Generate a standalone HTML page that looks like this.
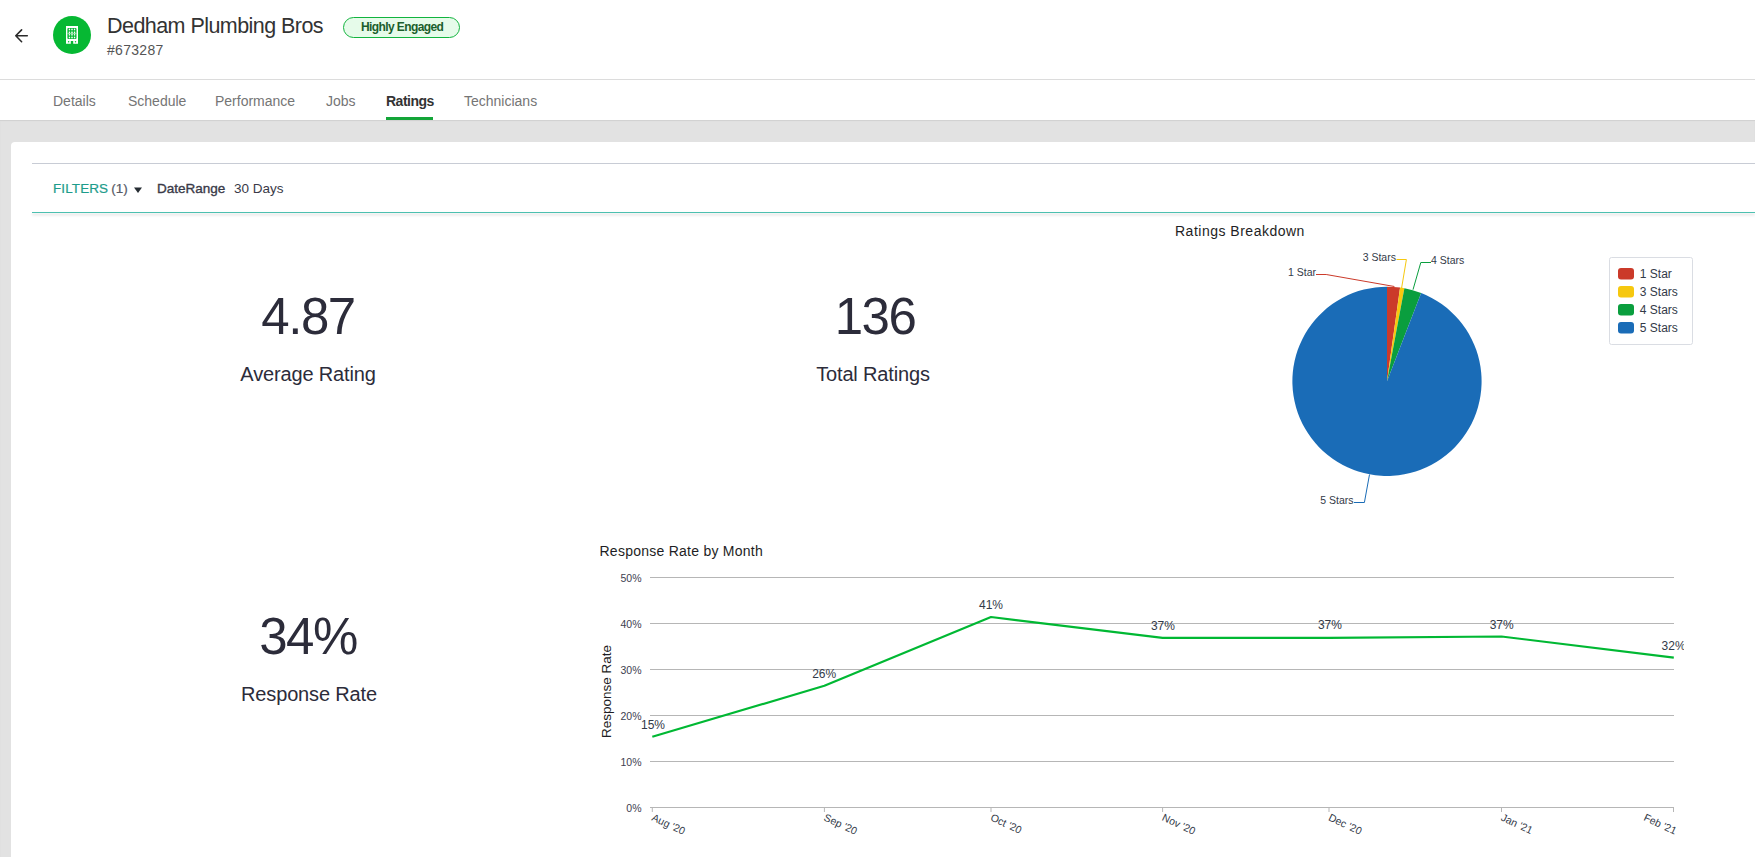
<!DOCTYPE html>
<html><head><meta charset="utf-8">
<style>
html,body{margin:0;padding:0;}
body{width:1755px;height:857px;overflow:hidden;position:relative;background:#fff;font-family:"Liberation Sans",sans-serif;}
.a{position:absolute;white-space:nowrap;line-height:1;}
#hdr-line{position:absolute;left:0;top:79px;width:1755px;height:1px;background:#dcdcdc;}
#gray{position:absolute;left:0;top:120px;width:1755px;height:737px;background:#e2e2e2;box-shadow:inset 0 1px 1px rgba(0,0,0,0.08);}
#card{position:absolute;left:11px;top:142px;width:1760px;height:730px;background:#fff;border-radius:4px;}
.tab{position:absolute;top:94px;font-size:14px;color:#757575;line-height:1;}
.kpi{font-size:51px;color:#2c2c3a;transform:translateX(-50%);letter-spacing:-1.5px;}
.kpil{font-size:20px;color:#2c2c3a;transform:translateX(-50%);letter-spacing:-0.15px;}
</style></head><body>
<!-- header -->
<svg class="a" style="left:13px;top:27px" width="18" height="18" viewBox="0 0 18 18">
  <path d="M14.3 8.8H3M8.6 2.9L2.8 8.8L8.6 14.7" fill="none" stroke="#2b2b2b" stroke-width="1.6" stroke-linecap="round" stroke-linejoin="round"/>
</svg>
<div class="a" style="left:53px;top:16px;width:38px;height:38px;border-radius:50%;background:#06b833;"></div>
<svg class="a" style="left:66px;top:26px" width="12" height="18" viewBox="0 0 12 18">
  <path d="M0 0h12v17.7h-4.8v-2.6h-2.4v2.6h-4.8z" fill="#fff"/>
  <rect x="1.4" y="1.9" width="9.1" height="11.1" rx="1" fill="#06b833"/>
  <path d="M1.6 7.4h8.8" stroke="#fff" stroke-width="0.7" opacity="0.8"/>
  <path d="M3.4 2.2v10.5M6 2.2v10.5M8.6 2.2v10.5" stroke="#fff" stroke-width="0.6" opacity="0.45"/>
  <g fill="#fff"><rect x="2.8" y="2.8" width="1.3" height="1.3"/><rect x="5.3" y="2.8" width="1.4" height="1.3"/><rect x="7.9" y="2.8" width="1.3" height="1.3"/>
  <rect x="2.8" y="5.7" width="1.3" height="1.3"/><rect x="5.3" y="5.7" width="1.4" height="1.3"/><rect x="7.9" y="5.7" width="1.3" height="1.3"/>
  <rect x="2.8" y="8.1" width="1.3" height="1.3"/><rect x="5.3" y="8.1" width="1.4" height="1.3"/><rect x="7.9" y="8.1" width="1.3" height="1.3"/>
  <rect x="2.8" y="10.9" width="1.3" height="1.3"/><rect x="5.3" y="10.9" width="1.4" height="1.3"/><rect x="7.9" y="10.9" width="1.3" height="1.3"/></g>
  <circle cx="2.6" cy="15.7" r="0.75" fill="#06b833"/><circle cx="9.5" cy="15.7" r="0.75" fill="#06b833"/>
</svg>
<div class="a" id="title" style="left:107px;top:16px;font-size:21.5px;letter-spacing:-0.55px;color:#333;">Dedham Plumbing Bros</div>
<div class="a" id="sub" style="left:107px;top:43px;font-size:14px;color:#555;letter-spacing:0.3px;">#673287</div>
<div class="a" style="left:343px;top:17px;width:115px;height:19px;border:1px solid #12b43e;border-radius:11px;background:#e6fbea;"></div>
<div class="a" id="badge" style="left:361px;top:21px;font-size:12px;font-weight:bold;letter-spacing:-0.6px;color:#1b5e2c;">Highly Engaged</div>
<div id="hdr-line"></div>
<!-- tabs -->
<div class="tab" style="left:53px">Details</div>
<div class="tab" style="left:128px">Schedule</div>
<div class="tab" style="left:215px">Performance</div>
<div class="tab" style="left:326px">Jobs</div>
<div class="tab" style="left:386px;color:#333;font-weight:bold;letter-spacing:-0.5px">Ratings</div>
<div class="tab" style="left:464px">Technicians</div>
<div class="a" style="left:386px;top:117px;width:47px;height:3px;background:#13a538;"></div>
<div id="gray"></div>
<div id="card"></div>
<!-- filter bar -->
<div class="a" style="left:32px;top:163px;width:1723px;height:1px;background:#c8ccd5;"></div>
<div class="a" style="left:32px;top:212px;width:1723px;height:1px;background:#4cc0b0;box-shadow:0 2px 3px rgba(0,0,0,0.2);"></div>
<div class="a" id="filters" style="left:53px;top:182px;font-size:13.5px;letter-spacing:0.1px;color:#1d9c8c;-webkit-text-stroke:0.2px #1d9c8c;">FILTERS<span style="color:#555a66;-webkit-text-stroke:0.2px #555a66;margin-left:3px;letter-spacing:0;font-size:13.5px">(1)</span></div>
<svg class="a" style="left:133px;top:187px" width="10" height="7" viewBox="0 0 10 7"><path d="M1 0.5h8L5 6z" fill="#262d33"/></svg>
<div class="a" id="dr" style="left:157px;top:182px;font-size:13.5px;color:#3a3a48;-webkit-text-stroke:0.35px #3a3a48;">DateRange</div>
<div class="a" id="days" style="left:234px;top:182px;font-size:13.5px;color:#3a3a48;">30 Days</div>
<!-- KPIs -->
<div class="a kpi" id="k1" style="left:308px;top:291px;">4.87</div>
<div class="a kpil" id="k1l" style="left:308px;top:364px;">Average Rating</div>
<div class="a kpi" id="k2" style="left:875px;top:291px;">136</div>
<div class="a kpil" id="k2l" style="left:873px;top:364px;">Total Ratings</div>
<div class="a kpi" id="k3" style="left:308px;top:611px;">34%</div>
<div class="a kpil" id="k3l" style="left:309px;top:684px;">Response Rate</div>
<!-- charts -->
<svg class="a" style="left:0;top:0" width="1755" height="857" viewBox="0 0 1755 857">
<style>
.t{font-family:"Liberation Sans",sans-serif;fill:#1e1e24;font-size:14px;}
.pl{font-family:"Liberation Sans",sans-serif;fill:#333a48;font-size:10.5px;}
.lg{font-family:"Liberation Sans",sans-serif;fill:#333a48;font-size:12px;}
.yl{font-family:"Liberation Sans",sans-serif;fill:#3d4150;font-size:10.5px;}
.xl{font-family:"Liberation Sans",sans-serif;fill:#333a48;font-size:10.5px;}
.dl{font-family:"Liberation Sans",sans-serif;fill:#333a48;font-size:12px;}
</style>
<!-- pie -->
<text x="1175" y="236" class="t" style="letter-spacing:0.5px">Ratings Breakdown</text>
<path d="M1387 381.3L1387.00 286.70A94.6 94.6 0 0 1 1400.07 287.61Z" fill="#cb3a2a"/>
<path d="M1387 381.3L1400.07 287.61A94.6 94.6 0 0 1 1404.38 288.31Z" fill="#f6c80f"/>
<path d="M1387 381.3L1404.38 288.31A94.6 94.6 0 0 1 1421.17 293.09Z" fill="#0a9e3e"/>
<path d="M1387 381.3L1421.17 293.09A94.6 94.6 0 1 1 1387.00 286.70Z" fill="#1a6cb7"/>
<path d="M1316 274.5H1326.2L1394.4 286.5" fill="none" stroke="#cb3a2a" stroke-width="1"/>
<path d="M1396.5 259.5H1406.4L1401.6 288" fill="none" stroke="#f6c80f" stroke-width="1"/>
<path d="M1431 262.5H1420.8L1413 289.7" fill="none" stroke="#0a9e3e" stroke-width="1"/>
<path d="M1354 502.5H1364.4L1369.5 474.5" fill="none" stroke="#1a6cb7" stroke-width="1"/>
<text x="1288" y="275.7" class="pl">1 Star</text>
<text x="1362.7" y="261" class="pl">3 Stars</text>
<text x="1431" y="264" class="pl">4 Stars</text>
<text x="1320.3" y="503.9" class="pl">5 Stars</text>
<rect x="1609.5" y="257.5" width="83" height="87" rx="2" fill="#fff" stroke="#dadde3" stroke-width="1"/>
<rect x="1618" y="268" width="16" height="11.5" rx="3" fill="#cb3a2a"/>
<rect x="1618" y="286" width="16" height="11.5" rx="3" fill="#f6c80f"/>
<rect x="1618" y="304" width="16" height="11.5" rx="3" fill="#0a9e3e"/>
<rect x="1618" y="322" width="16" height="11.5" rx="3" fill="#1a6cb7"/>
<text x="1639.8" y="278.1" class="lg">1 Star</text>
<text x="1639.8" y="296.1" class="lg">3 Stars</text>
<text x="1639.8" y="314.1" class="lg">4 Stars</text>
<text x="1639.8" y="332.1" class="lg">5 Stars</text>
<!-- line chart -->
<text x="599.5" y="555.8" class="t" style="letter-spacing:0.25px">Response Rate by Month</text>
<rect x="650" y="577" width="1024" height="1" fill="#b6b6b6"/>
<rect x="650" y="623" width="1024" height="1" fill="#b6b6b6"/>
<rect x="650" y="669" width="1024" height="1" fill="#b6b6b6"/>
<rect x="650" y="715" width="1024" height="1" fill="#b6b6b6"/>
<rect x="650" y="761" width="1024" height="1" fill="#b6b6b6"/>
<rect x="650" y="807" width="1024" height="1" fill="#b6b6b6"/>
<rect x="651.8" y="807" width="1" height="5" fill="#b6b6b6"/>
<rect x="823.9" y="807" width="1" height="5" fill="#b6b6b6"/>
<rect x="990.5" y="807" width="1" height="5" fill="#b6b6b6"/>
<rect x="1162.1" y="807" width="1" height="5" fill="#b6b6b6"/>
<rect x="1328.5" y="807" width="1" height="5" fill="#b6b6b6"/>
<rect x="1501.0" y="807" width="1" height="5" fill="#b6b6b6"/>
<rect x="1673.0" y="807" width="1" height="5" fill="#b6b6b6"/>
<text x="641.5" y="581.5" text-anchor="end" class="yl">50%</text>
<text x="641.5" y="627.5" text-anchor="end" class="yl">40%</text>
<text x="641.5" y="673.5" text-anchor="end" class="yl">30%</text>
<text x="641.5" y="719.5" text-anchor="end" class="yl">20%</text>
<text x="641.5" y="765.5" text-anchor="end" class="yl">10%</text>
<text x="641.5" y="811.5" text-anchor="end" class="yl">0%</text>
<text transform="translate(610.5,738) rotate(-90)" class="t" style="font-size:13.5px">Response Rate</text>
<text transform="translate(651.0,820) rotate(25)" class="xl">Aug '20</text>
<text transform="translate(823.1,820) rotate(25)" class="xl">Sep '20</text>
<text transform="translate(989.7,820) rotate(25)" class="xl">Oct '20</text>
<text transform="translate(1161.3,820) rotate(25)" class="xl">Nov '20</text>
<text transform="translate(1327.7,820) rotate(25)" class="xl">Dec '20</text>
<text transform="translate(1500.2,820) rotate(25)" class="xl">Jan '21</text>
<text transform="translate(1643,820) rotate(25)" class="xl">Feb '21</text>
<polyline points="652.3,736.8 824.4,685.8 991,617 1162.6,637.9 1329,637.9 1501.5,636.5 1673.8,657.6" fill="none" stroke="#00b833" stroke-width="2.2" stroke-linejoin="round"/>
<text x="641" y="729" class="dl">15%</text>
<text x="812.2" y="678.4" class="dl">26%</text>
<text x="979" y="609" class="dl">41%</text>
<text x="1150.9" y="629.8" class="dl">37%</text>
<text x="1317.9" y="629.2" class="dl">37%</text>
<text x="1489.7" y="629.2" class="dl">37%</text>
<svg x="0" y="0" width="1684" height="857" overflow="hidden"><text x="1661.6" y="650" class="dl">32%</text></svg>
</svg>
<!-- /charts -->
</body></html>
